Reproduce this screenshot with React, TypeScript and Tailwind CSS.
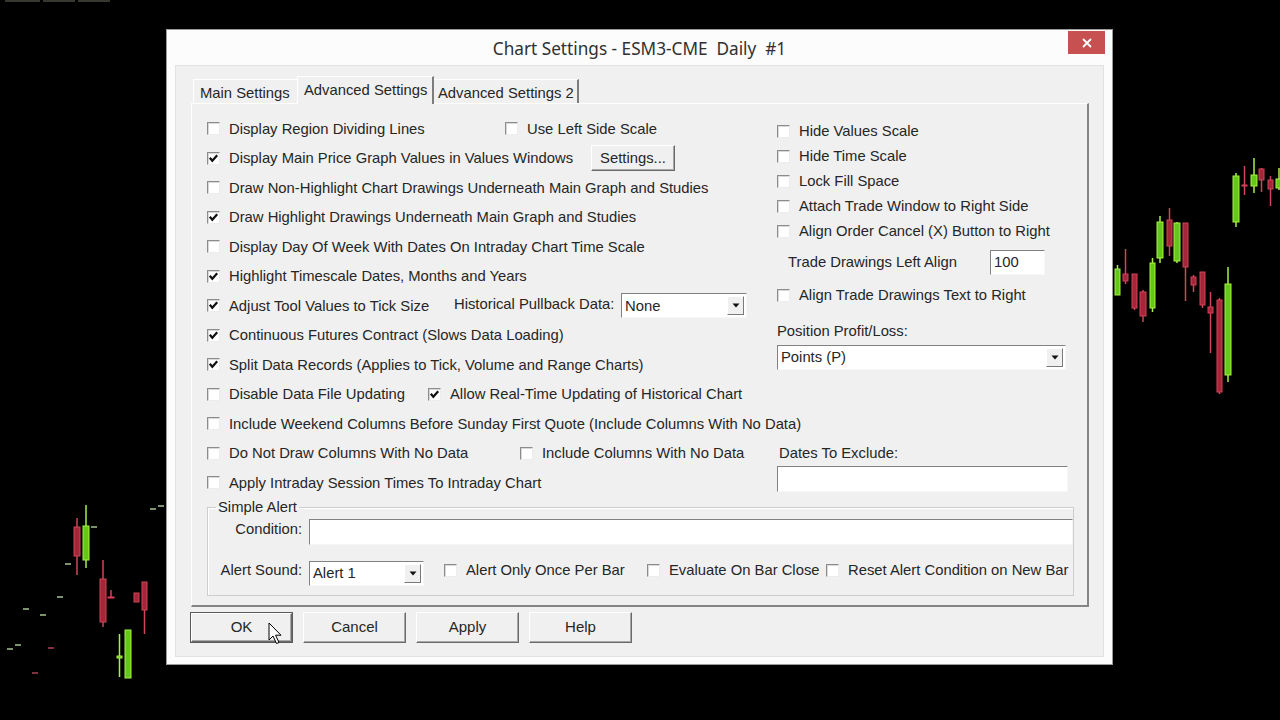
import React from "react";

type Candle = { x: number; w: number; bt: number; bb: number; wt: number; wb: number; c: "r" | "g" };

const candles: Candle[] = [
    // left edge of chart
    { x: 74, w: 6, bt: 527, bb: 556, wt: 518, wb: 575, c: "r" },
    { x: 83, w: 6, bt: 526, bb: 560, wt: 505, wb: 568, c: "g" },
    { x: 100, w: 6, bt: 579, bb: 622, wt: 560, wb: 627, c: "r" },
    { x: 108, w: 6, bt: 597, bb: 598, wt: 590, wb: 598, c: "r" },
    { x: 117, w: 5, bt: 656, bb: 658, wt: 634, wb: 677, c: "g" },
    { x: 125, w: 6, bt: 630, bb: 678, wt: 630, wb: 678, c: "g" },
    { x: 134, w: 5, bt: 593, bb: 602, wt: 593, wb: 602, c: "r" },
    { x: 142, w: 5, bt: 582, bb: 610, wt: 582, wb: 634, c: "r" },
    // right edge of chart
    { x: 1115, w: 5, bt: 269, bb: 295, wt: 265, wb: 295, c: "g" },
    { x: 1123, w: 5, bt: 274, bb: 281, wt: 249, wb: 284, c: "r" },
    { x: 1132, w: 5, bt: 274, bb: 308, wt: 274, wb: 310, c: "r" },
    { x: 1140, w: 6, bt: 292, bb: 316, wt: 290, wb: 322, c: "r" },
    { x: 1150, w: 5, bt: 263, bb: 308, wt: 258, wb: 312, c: "g" },
    { x: 1157, w: 6, bt: 222, bb: 258, wt: 216, wb: 263, c: "g" },
    { x: 1167, w: 5, bt: 220, bb: 246, wt: 208, wb: 256, c: "r" },
    { x: 1174, w: 6, bt: 223, bb: 261, wt: 222, wb: 263, c: "g" },
    { x: 1183, w: 5, bt: 223, bb: 267, wt: 223, wb: 301, c: "r" },
    { x: 1191, w: 5, bt: 277, bb: 285, wt: 275, wb: 292, c: "r" },
    { x: 1200, w: 5, bt: 272, bb: 305, wt: 272, wb: 308, c: "r" },
    { x: 1208, w: 5, bt: 307, bb: 313, wt: 292, wb: 353, c: "r" },
    { x: 1217, w: 5, bt: 300, bb: 392, wt: 298, wb: 394, c: "r" },
    { x: 1225, w: 6, bt: 284, bb: 375, wt: 267, wb: 382, c: "g" },
    { x: 1233, w: 6, bt: 176, bb: 222, wt: 173, wb: 227, c: "g" },
    { x: 1242, w: 5, bt: 185, bb: 186, wt: 166, wb: 195, c: "r" },
    { x: 1251, w: 6, bt: 175, bb: 186, wt: 158, wb: 193, c: "g" },
    { x: 1259, w: 5, bt: 169, bb: 180, wt: 168, wb: 192, c: "r" },
    { x: 1268, w: 5, bt: 180, bb: 189, wt: 176, wb: 206, c: "r" },
    { x: 1276, w: 6, bt: 179, bb: 188, wt: 168, wb: 190, c: "g" },
];

const dashes: [number, number, string][] = [
    [7, 649, "#9fb88a"],
    [15, 645, "#9fb88a"],
    [23, 609, "#9fb88a"],
    [40, 615, "#9fb88a"],
    [48, 648, "#a04050"],
    [32, 673, "#a04050"],
    [57, 597, "#9fb88a"],
    [65, 564, "#9fb88a"],
    [91, 527, "#9fb88a"],
    [150, 509, "#9fb88a"],
    [158, 506, "#9fb88a"],
];

function Chart() {
    return (
        <svg className="absolute inset-0" width="1280" height="720" viewBox="0 0 1280 720">
            <line x1="5" y1="1" x2="40" y2="1" stroke="#4a4a40" strokeWidth="1.5" />
            <line x1="43" y1="1" x2="75" y2="1" stroke="#4a4a40" strokeWidth="1.5" />
            <line x1="78" y1="1" x2="110" y2="1" stroke="#4a4a40" strokeWidth="1.5" />
            {dashes.map(([x, y, c], i) => (
                <line key={i} x1={x} y1={y} x2={x + 6} y2={y} stroke={c} strokeWidth="1.6" />
            ))}
            {candles.map((k, i) => {
                const stroke = k.c === "r" ? "#d04558" : "#a8f044";
                const fill = k.c === "r" ? "#a52638" : "#64c81a";
                const cx = k.x + k.w / 2;
                return (
                    <g key={i}>
                        <line x1={cx} y1={k.wt} x2={cx} y2={k.wb} stroke={stroke} strokeWidth="1.5" />
                        <rect x={k.x} y={k.bt} width={k.w} height={Math.max(k.bb - k.bt, 1)} fill={fill} stroke={stroke} strokeWidth="1" />
                    </g>
                );
            })}
        </svg>
    );
}

const Check = ({ on }: { on?: boolean }) => (
    <span className="flex w-[13px] h-[13px] shrink-0 bg-white border-t border-l border-t-[#8c8c8c] border-l-[#8c8c8c] border-r border-b border-r-[#ececec] border-b-[#ececec] shadow-[inset_1px_1px_0_#d8d8d8]">
        {on && (
            <svg width="11" height="11" viewBox="0 0 11 11">
                <polyline points="1.8,4.8 4.3,7.8 9.2,2.2" fill="none" stroke="#111" strokeWidth="2.2" />
            </svg>
        )}
    </span>
);

const Item = ({ on, children }: { on?: boolean; children: React.ReactNode }) => (
    <div className="flex items-center gap-[9px] whitespace-nowrap">
        <Check on={on} />
        <span>{children}</span>
    </div>
);

const Arrow = () => (
    <svg width="8" height="5" viewBox="0 0 8 5">
        <polygon points="0.5,0.5 7.5,0.5 4,4.5" fill="#111" />
    </svg>
);

const Combo = ({ value, className }: { value: string; className: string }) => (
    <div className={`flex h-[25px] bg-white border-t border-l border-t-[#828282] border-l-[#828282] border-r border-b border-r-[#f6f6f6] border-b-[#f6f6f6] ${className}`}>
        <span className="flex-1 flex items-center pl-[3px] whitespace-nowrap">{value}</span>
        <span className="w-[17px] my-[2px] mr-[2px] flex items-center justify-center bg-[#f0f0f0] border-t border-l border-t-white border-l-white border-r border-b border-r-[#7a7a7a] border-b-[#7a7a7a]">
            <Arrow />
        </span>
    </div>
);

const Field = ({ value, className }: { value?: string; className: string }) => (
    <div className={`flex items-center pl-[3px] bg-white border-t border-l border-t-[#828282] border-l-[#828282] border-r border-b border-r-[#f6f6f6] border-b-[#f6f6f6] ${className}`}>
        {value}
    </div>
);

const Btn = ({ label, main, className }: { label: string; main?: boolean; className: string }) => (
    <div className={`flex items-center justify-center bg-[#f0f0f0] ${main ? "border border-[#5a5a5a]" : ""} ${className}`}>
        <div className="w-full h-full flex items-center justify-center border-t border-l border-t-white border-l-white border-r border-b border-r-[#6a6a6a] border-b-[#6a6a6a] shadow-[inset_-1px_-1px_0_#a8a8a8]">
            {label}
        </div>
    </div>
);

const Row = ({ children }: { children: React.ReactNode }) => (
    <div className="h-[29.5px] flex items-center">{children}</div>
);

const RRow = ({ children, className = "" }: { children: React.ReactNode; className?: string }) => (
    <div className={`h-[25px] flex items-center ${className}`}>{children}</div>
);

export default function App() {
    return (
        <div className="relative w-[1280px] h-[720px] bg-black overflow-hidden font-['Liberation_Sans',Arial,sans-serif] text-[14.8px] text-[#262626]">
            <Chart />

            <div className="absolute left-[166px] top-[29px] w-[947px] h-[636px] bg-[#fcfcfc] border border-[#9a9a9a] flex flex-col">
                {/* title bar */}
                <div className="relative h-[35px] flex items-center justify-center">
                    <span className="font-['Noto_Sans',sans-serif] text-[17.2px] text-[#303030] whitespace-pre pt-[2px]">
                        Chart Settings - ESM3-CME  Daily  #1
                    </span>
                    <div className="absolute right-[7px] top-[1px] w-[37px] h-[23px] bg-[#c75050] flex items-center justify-center">
                        <svg width="10" height="10" viewBox="0 0 10 10">
                            <path d="M1 1 L9 9 M9 1 L1 9" stroke="#fff" strokeWidth="1.8" />
                        </svg>
                    </div>
                </div>

                {/* client area */}
                <div className="mx-[8px] h-[592px] bg-[#f0f0f0] border border-[#e2e2e2] flex flex-col pl-[15px]">
                    {/* tabs */}
                    <div className="flex items-end h-[37px] pl-[2px]">
                        <div className="h-[24px] w-[104px] pl-[6px] pt-[2px] border-t border-l border-t-white border-l-white">
                            Main Settings
                        </div>
                        <div className="relative z-10 -mb-px h-[28px] w-[137px] pl-[6px] pt-[2px] bg-[#f0f0f0] border-t border-l border-t-white border-l-white border-r-2 border-r-[#7c7c7c]">
                            Advanced Settings
                        </div>
                        <div className="h-[24px] w-[145px] pl-[4px] pt-[2px] border-t border-r-2 border-t-white border-r-[#7c7c7c]">
                            Advanced Settings 2
                        </div>
                    </div>

                    {/* tab panel */}
                    <div className="w-[898px] h-[504px] border-t border-l border-t-white border-l-white border-r-2 border-b-2 border-r-[#858585] border-b-[#858585] pl-[15px] pt-[10px] flex flex-col">
                        <div className="flex">
                            {/* left column */}
                            <div className="w-[570px] flex flex-col">
                                <Row>
                                    <div className="w-[298px]"><Item>Display Region Dividing Lines</Item></div>
                                    <Item>Use Left Side Scale</Item>
                                </Row>
                                <Row>
                                    <div className="w-[384px]"><Item on>Display Main Price Graph Values in Values Windows</Item></div>
                                    <Btn label="Settings..." className="w-[84px] h-[26px]" />
                                </Row>
                                <Row><Item>Draw Non-Highlight Chart Drawings Underneath Main Graph and Studies</Item></Row>
                                <Row><Item on>Draw Highlight Drawings Underneath Main Graph and Studies</Item></Row>
                                <Row><Item>Display Day Of Week With Dates On Intraday Chart Time Scale</Item></Row>
                                <Row><Item on>Highlight Timescale Dates, Months and Years</Item></Row>
                                <Row>
                                    <div className="w-[247px]"><Item on>Adjust Tool Values to Tick Size</Item></div>
                                    <span className="w-[167px] whitespace-nowrap -mt-[3px]">Historical Pullback Data:</span>
                                    <Combo value="None" className="w-[126px]" />
                                </Row>
                                <Row><Item on>Continuous Futures Contract (Slows Data Loading)</Item></Row>
                                <Row><Item on>Split Data Records (Applies to Tick, Volume and Range Charts)</Item></Row>
                                <Row>
                                    <div className="w-[221px]"><Item>Disable Data File Updating</Item></div>
                                    <Item on>Allow Real-Time Updating of Historical Chart</Item>
                                </Row>
                                <Row><Item>Include Weekend Columns Before Sunday First Quote (Include Columns With No Data)</Item></Row>
                                <Row>
                                    <div className="w-[313px]"><Item>Do Not Draw Columns With No Data</Item></div>
                                    <Item>Include Columns With No Data</Item>
                                </Row>
                                <Row><Item>Apply Intraday Session Times To Intraday Chart</Item></Row>
                            </div>

                            {/* right column */}
                            <div className="flex-1 flex flex-col pt-[4.5px]">
                                <RRow><Item>Hide Values Scale</Item></RRow>
                                <RRow><Item>Hide Time Scale</Item></RRow>
                                <RRow><Item>Lock Fill Space</Item></RRow>
                                <RRow><Item>Attach Trade Window to Right Side</Item></RRow>
                                <RRow><Item>Align Order Cancel (X) Button to Right</Item></RRow>
                                <RRow className="mt-[6.5px]">
                                    <span className="w-[213px] pl-[11px] whitespace-nowrap">Trade Drawings Left Align</span>
                                    <Field value="100" className="w-[55px] h-[25px]" />
                                </RRow>
                                <RRow className="mt-[7.5px]"><Item>Align Trade Drawings Text to Right</Item></RRow>
                                <div className="mt-[15px] h-[17px] leading-[17px]">Position Profit/Loss:</div>
                                <Combo value="Points (P)" className="mt-[5.5px] w-[289px]" />
                                <div className="mt-[74.5px] h-[17px] leading-[17px] pl-[2px]">Dates To Exclude:</div>
                                <Field className="mt-[4.5px] w-[291px] h-[26px]" />
                            </div>
                        </div>

                        {/* simple alert group */}
                        <fieldset className="mt-[1px] w-[867px] border border-[#cdcdcd] shadow-[inset_1px_1px_0_#fff] pb-[9px]">
                            <legend className="ml-[8px] px-[2px] leading-[17px]">Simple Alert</legend>
                            <div className="flex items-center mt-[3.5px]">
                                <span className="w-[94px] text-right mr-[7px] -mt-[6px]">Condition:</span>
                                <Field className="flex-1 h-[26px]" />
                            </div>
                            <div className="flex items-center mt-[16px]">
                                <span className="w-[94px] text-right mr-[7px] -mt-[7px]">Alert Sound:</span>
                                <Combo value="Alert 1" className="w-[115px]" />
                                <div className="w-[203px] ml-[20px] -mt-[7px]"><Item>Alert Only Once Per Bar</Item></div>
                                <div className="w-[179px] -mt-[7px]"><Item>Evaluate On Bar Close</Item></div>
                                <div className="-mt-[7px]"><Item>Reset Alert Condition on New Bar</Item></div>
                            </div>
                        </fieldset>
                    </div>

                    {/* buttons */}
                    <div className="flex gap-[10px] mt-[5px] -ml-px text-[15px]">
                        <Btn label="OK" main className="w-[103px] h-[31px]" />
                        <Btn label="Cancel" className="w-[103px] h-[31px]" />
                        <Btn label="Apply" className="w-[103px] h-[31px]" />
                        <Btn label="Help" className="w-[103px] h-[31px]" />
                    </div>
                </div>
            </div>

            {/* mouse pointer over OK */}
            <svg className="absolute left-[268px] top-[622px]" width="16" height="24" viewBox="0 0 16 24">
                <path d="M1 1 L1 18 L5 14 L8.5 21.5 L11 20.5 L7.6 13.2 L13 13.2 Z" fill="#fff" stroke="#000" strokeWidth="1" strokeLinejoin="round" />
            </svg>
        </div>
    );
}
